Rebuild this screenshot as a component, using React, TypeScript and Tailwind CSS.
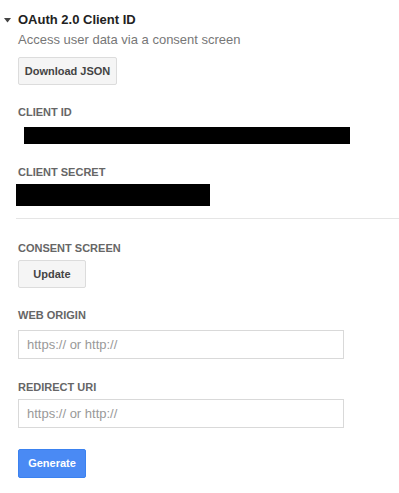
export default function App() {
  const label = "text-[11px] font-bold leading-[14px] text-[#666] uppercase";
  const btn =
    "h-[28px] whitespace-nowrap rounded-[2px] border border-[#dcdcdc] bg-[#f5f5f5] px-0 text-[11px] font-bold leading-none text-[#444]";
  const input =
    "h-[29px] w-[326px] border border-[#d9d9d9] px-[8px] text-[13px] text-[#222] placeholder-[#999] outline-none";
  return (
    <div className="min-h-screen bg-white font-['Liberation_Sans',Arial,sans-serif]">
      <div className="flex flex-col pt-[11px]">
        <div className="flex items-center">
          <svg width="7" height="5" viewBox="0 0 7 5" className="ml-[4px] mr-[7px]">
            <path d="M0 0 H7 L3.5 4.5 Z" fill="#444" />
          </svg>
          <h2 className="text-[13px] font-bold leading-[18px] text-[#222]">OAuth 2.0 Client ID</h2>
        </div>
        <p className="ml-[18px] mt-[2px] text-[13px] leading-[18px] text-[#777]">
          Access user data via a consent screen
        </p>
        <div className="ml-[18px] mt-[8px] flex">
          <button className={btn + " w-[99px]"}>Download JSON</button>
        </div>

        <div className={label + " ml-[18px] mt-[20px]"}>Client ID</div>
        <div className="ml-[24px] mt-[8px] h-[17px] w-[326px] bg-black" />

        <div className={label + " ml-[18px] mt-[21px]"}>Client Secret</div>
        <div className="ml-[16px] mt-[5px] h-[22px] w-[194px] bg-black" />

        <div className="ml-[16px] mt-[12px] h-px bg-[#e5e5e5]" />

        <div className={label + " ml-[18px] mt-[22px]"}>Consent Screen</div>
        <div className="ml-[18px] mt-[5px] flex">
          <button className={btn + " w-[68px]"}>Update</button>
        </div>

        <div className={label + " ml-[18px] mt-[20px]"}>Web Origin</div>
        <input className={input + " ml-[18px] mt-[8px]"} placeholder="https:// or http://" />

        <div className={label + " ml-[18px] mt-[21px]"}>Redirect URI</div>
        <input className={input + " ml-[18px] mt-[5px]"} placeholder="https:// or http://" />

        <div className="ml-[18px] mt-[21px] flex">
          <button className="h-[29px] w-[68px] rounded-[2px] border border-[#3b82f0] bg-[#4a8af4] text-[11px] font-bold leading-none text-white">
            Generate
          </button>
        </div>
      </div>
    </div>
  );
}
